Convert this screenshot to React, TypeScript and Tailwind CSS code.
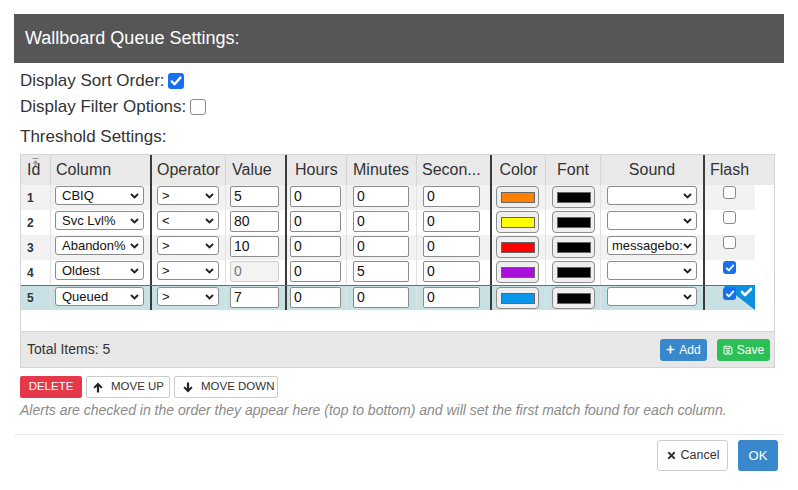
import { FaTimes, FaPlus, FaRegSave } from "react-icons/fa";

type Row = {
  id: number;
  column: string;
  op: string;
  value: string;
  hours: string;
  minutes: string;
  seconds: string;
  color: string;
  sound: string;
  flash: boolean;
  disabled?: boolean;
};

const rows: Row[] = [
  { id: 1, column: "CBIQ", op: ">", value: "5", hours: "0", minutes: "0", seconds: "0", color: "bg-[#ff7f00]", sound: "", flash: false },
  { id: 2, column: "Svc Lvl%", op: "<", value: "80", hours: "0", minutes: "0", seconds: "0", color: "bg-[#ffff00]", sound: "", flash: false },
  { id: 3, column: "Abandon%", op: ">", value: "10", hours: "0", minutes: "0", seconds: "0", color: "bg-[#ff0000]", sound: "messagebo:", flash: false },
  { id: 4, column: "Oldest", op: ">", value: "0", hours: "0", minutes: "5", seconds: "0", color: "bg-[#a80fd8]", sound: "", flash: true, disabled: true },
  { id: 5, column: "Queued", op: ">", value: "7", hours: "0", minutes: "0", seconds: "0", color: "bg-[#0a96ea]", sound: "", flash: true },
];

const grid =
  "grid grid-cols-[29px_100px_75px_60px_61px_70px_74px_55px_55px_103px_52px]";

function Check({ size = 16 }: { size?: number }) {
  return (
    <svg width={size} height={size} viewBox="0 0 16 16">
      <path
        d="M3.8 8.4 L6.6 11.2 L12.4 4.6"
        stroke="white"
        strokeWidth="2.4"
        fill="none"
        strokeLinecap="round"
        strokeLinejoin="round"
      />
    </svg>
  );
}

function Chevron() {
  return (
    <svg width="9" height="6" viewBox="0 0 9 6" className="shrink-0">
      <path d="M1 1 L4.5 4.5 L8 1" stroke="#222" strokeWidth="1.9" fill="none" />
    </svg>
  );
}

// bold arrow, like the font-awesome one
function Arrow({ down }: { down?: boolean }) {
  return (
    <svg width="10" height="11" viewBox="0 0 10 11" className={down ? "rotate-180" : ""}>
      <path d="M5 0.5 L9.6 5.2 L8.2 6.6 L6.1 4.5 V10.5 H3.9 V4.5 L1.8 6.6 L0.4 5.2 Z" fill="#222" />
    </svg>
  );
}

// select-looking box
function Select({ text, w, pl }: { text: string; w: string; pl: string }) {
  return (
    <div
      className={`h-[19px] ${w} border border-[#8c8c8c] rounded-[3px] bg-white flex items-center pr-[4px] ${pl} text-[13px] text-[#111]`}
    >
      <span className="flex-1 whitespace-nowrap leading-[17px]">{text}</span>
      <Chevron />
    </div>
  );
}

function Input({ text, w, disabled }: { text: string; w: string; disabled?: boolean }) {
  return (
    <div
      className={`h-[21px] ${w} border rounded-[2px] pl-[3px] text-[14px] leading-[19px] ${
        disabled
          ? "bg-[#f3f3f3] border-[#cfcfcf] text-[#777]"
          : "bg-white border-[#8c8c8c] text-[#111]"
      }`}
    >
      {text}
    </div>
  );
}

function Swatch({ color, w }: { color: string; w: string }) {
  return (
    <div
      className={`h-[22px] ${w} border border-[#8c8c8c] rounded-[4px] bg-[#efefef] flex items-center justify-center`}
    >
      <div className={`w-[34px] h-[11px] border border-[#666] ${color}`} />
    </div>
  );
}

function App() {
  return (
    <div className="w-[798px] h-[490px] overflow-hidden bg-white px-[14px] pt-[14px] font-['Liberation_Sans',Arial,sans-serif] text-[#333]">
      {/* title bar */}
      <div className="h-[49px] bg-[#565656] text-white text-[18px] flex items-center pl-[11px]">
        Wallboard Queue Settings:
      </div>

      <div className="pl-[6px] pt-[5px]">
        <div className="h-[26px] flex items-center text-[17px]">
          Display Sort Order:
          <span className="ml-[3px] w-[16px] h-[16px] rounded-[3px] bg-[#1670f0] flex items-center justify-center">
            <Check />
          </span>
        </div>
        <div className="h-[26px] flex items-center text-[17px]">
          Display Filter Options:
          <span className="ml-[4px] w-[16px] h-[16px] rounded-[3px] border border-[#8a8a8a] bg-white" />
        </div>
        <div className="mt-[6px] h-[22px] flex items-center text-[17px]">Threshold Settings:</div>

        {/* grid */}
        <div className="mt-[6px] w-[755px] border border-[#d4d4d4]">
          <div className="bg-[#e9e9e9]">
            <div className={`${grid} h-[30px] text-[16px] text-[#333]`}>
              <div className="relative pl-[6px] flex items-center">
                Id
                <svg width="7" height="8" viewBox="0 0 7 8" className="absolute left-[11px] top-[3px]">
                  <path d="M0.5 0.5 H6.5" stroke="#9a9a9a" strokeWidth="1" />
                  <path d="M3.5 2 L6.5 5.5 H4.5 V8 H2.5 V5.5 H0.5 Z" fill="#9a9a9a" />
                </svg>
              </div>
              <div className="border-l border-[#d6d6d6] pl-[5px] flex items-center">Column</div>
              <div className="border-l-2 border-[#3a3a3a] pl-[5px] flex items-center">Operator</div>
              <div className="border-l border-[#d6d6d6] pl-[6px] flex items-center">Value</div>
              <div className="border-l-2 border-[#3a3a3a] pl-[8px] flex items-center">Hours</div>
              <div className="border-l border-[#d6d6d6] pl-[6px] flex items-center">Minutes</div>
              <div className="border-l border-[#d6d6d6] pl-[5px] flex items-center">Secon...</div>
              <div className="border-l-2 border-[#3a3a3a] flex items-center justify-center">Color</div>
              <div className="border-l border-[#d6d6d6] flex items-center justify-center">Font</div>
              <div className="border-l border-[#d6d6d6] flex items-center justify-center">Sound</div>
              <div className="border-l-2 border-[#3a3a3a] pl-[5px] flex items-center">Flash</div>
            </div>
          </div>

          {rows.map((r) => {
            const selected = r.id === 5;
            const bg = selected
              ? "bg-[#c8e1e4] border-t border-[#2c7dbf]"
              : r.id % 2 === 1
              ? "bg-[#f2f2f2]"
              : "bg-white";
            return (
              <div key={r.id} className={`${grid} w-[734px] h-[25px] ${bg}`}>
                <div className="pl-[6px] flex items-center text-[12px] font-bold text-[#333]">{r.id}</div>
                <div className="border-l border-[#e2e2e2] pl-[4px] pt-[1px]">
                  <Select text={r.column} w="w-[89px]" pl="pl-[6px]" />
                </div>
                <div className="border-l-2 border-[#3a3a3a] pl-[5px] pt-[1px]">
                  <Select text={r.op} w="w-[62px]" pl="pl-[4px]" />
                </div>
                <div className="border-l border-[#e2e2e2] pl-[4px] pt-[1px]">
                  <Input text={r.value} w="w-[49px]" disabled={r.disabled} />
                </div>
                <div className="border-l-2 border-[#3a3a3a] pl-[3px] pt-[1px]">
                  <Input text={r.hours} w="w-[51px]" />
                </div>
                <div className="border-l border-[#e2e2e2] pl-[6px] pt-[1px]">
                  <Input text={r.minutes} w="w-[56px]" />
                </div>
                <div className="border-l border-[#e2e2e2] pl-[6px] pt-[1px]">
                  <Input text={r.seconds} w="w-[57px]" />
                </div>
                <div className="border-l-2 border-[#3a3a3a] pl-[4px] pt-[1px]">
                  <Swatch color={r.color} w="w-[43px]" />
                </div>
                <div className="border-l border-[#e2e2e2] pl-[6px] pt-[1px]">
                  <Swatch color="bg-black" w="w-[43px]" />
                </div>
                <div className="border-l border-[#e2e2e2] pl-[6px] pt-[1px]">
                  <Select text={r.sound} w="w-[90px]" pl="pl-[4px]" />
                </div>
                <div className="relative border-l-2 border-[#3a3a3a] pl-[18px] pt-[1px]">
                  {selected && (
                    <svg width="31" height="24" viewBox="0 0 31 24" className="absolute right-0 top-0">
                      <polygon points="0,0 31,0 31,24" fill="#0f8fe0" />
                      <path
                        d="M18 6 L21 9 L27 3"
                        stroke="white"
                        strokeWidth="2.6"
                        fill="none"
                        strokeLinecap="round"
                        strokeLinejoin="round"
                      />
                    </svg>
                  )}
                  {r.flash ? (
                    <span className="relative w-[13px] h-[13px] rounded-[3px] bg-[#1670f0] flex items-center justify-center">
                      <Check size={12} />
                    </span>
                  ) : (
                    <span className="block w-[13px] h-[13px] rounded-[3px] border border-[#8a8a8a] bg-white" />
                  )}
                </div>
              </div>
            );
          })}

          <div className="h-[21px] bg-white" />
          <div className="h-[36px] border-t border-[#d4d4d4] bg-[#e8e8e8] flex items-center justify-between pl-[6px] pr-[4px]">
            <span className="text-[14px] text-[#333]">Total Items: 5</span>
            <div className="flex gap-[10px]">
              <button className="h-[22px] w-[47px] rounded-[3px] bg-[#3a88cc] text-white text-[12px] flex items-center justify-center gap-[4px]">
                <FaPlus size={9} />
                Add
              </button>
              <button className="h-[22px] w-[53px] rounded-[3px] bg-[#2dbf57] text-white text-[12px] flex items-center justify-center gap-[4px]">
                <FaRegSave size={10} />
                Save
              </button>
            </div>
          </div>
        </div>

        {/* row actions */}
        <div className="mt-[8px] flex gap-[4px] h-[22px]">
          <button className="w-[62px] rounded-[2px] bg-[#e5394b] text-white text-[11.5px] flex items-center justify-center">
            DELETE
          </button>
          <button className="w-[84px] rounded-[2px] border border-[#cccccc] bg-white text-[11.5px] text-[#333] flex items-center pl-[6px] gap-[8px]">
            <Arrow />
            MOVE UP
          </button>
          <button className="w-[104px] rounded-[2px] border border-[#cccccc] bg-white text-[11.5px] text-[#333] flex items-center pl-[8px] gap-[8px]">
            <Arrow down />
            MOVE DOWN
          </button>
        </div>

        <div className="mt-[4px] h-[16px] leading-[16px] text-[14px] italic text-[#8a8a8a] whitespace-nowrap">
          Alerts are checked in the order they appear here (top to bottom) and will set the first match found for each column.
        </div>
      </div>

      <div className="mt-[16px] border-t border-[#e5e5e5]" />
      <div className="mt-[5px] flex justify-end gap-[10px] pr-[6px]">
        <button className="h-[31px] w-[71px] rounded-[3px] border border-[#cccccc] bg-white text-[12.5px] text-[#333] flex items-center justify-center gap-[4px]">
          <FaTimes size={11} />
          Cancel
        </button>
        <button className="h-[31px] w-[40px] rounded-[3px] bg-[#3a88cc] text-white text-[13px] flex items-center justify-center">
          OK
        </button>
      </div>
    </div>
  );
}

export default App;
